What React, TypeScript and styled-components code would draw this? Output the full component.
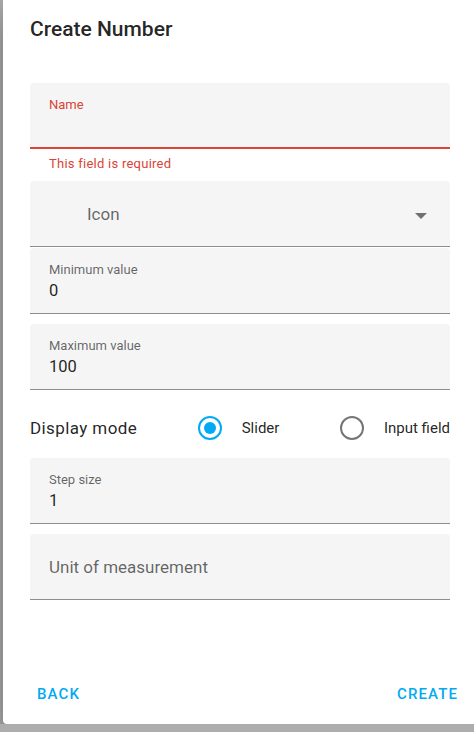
import styled, { createGlobalStyle } from 'styled-components'

const GlobalStyle = createGlobalStyle`
  html, body {
    margin: 0;
    padding: 0;
    background: #adadad;
    overflow: hidden;
    font-family: Roboto, "Noto Sans", "Liberation Sans", sans-serif;
  }
`

const Dialog = styled.div`
  margin-left: 3px;
  width: 474px;
  height: 724px;
  background: #ffffff;
  border-radius: 0 0 4px 4px;
  box-shadow: 0 11px 15px -7px rgba(0, 0, 0, 0.2),
    0 24px 38px 3px rgba(0, 0, 0, 0.14), 0 9px 46px 8px rgba(0, 0, 0, 0.12);
  display: flex;
  flex-direction: column;
  box-sizing: border-box;
`

const Title = styled.h2`
  margin: 0;
  padding: 15px 27px 0;
  font-size: 21px;
  line-height: 28px;
  font-weight: 500;
  color: rgba(0, 0, 0, 0.87);
`

const Content = styled.div`
  flex: 1;
  padding: 40px 27px 0;
  display: flex;
  flex-direction: column;
`

const Field = styled.div<{ $invalid?: boolean; $gap?: number }>`
  height: 66px;
  box-sizing: border-box;
  background: #f5f5f5;
  border-radius: 4px 4px 0 0;
  border-bottom: ${(p) =>
    p.$invalid ? '2px solid #db4437' : '1px solid rgba(0, 0, 0, 0.42)'};
  padding: 14px 19px 0;
  margin-top: ${(p) => p.$gap ?? 0}px;
  display: flex;
  flex-direction: column;
`

const Label = styled.span<{ $invalid?: boolean }>`
  font-size: 13px;
  line-height: 16px;
  color: ${(p) => (p.$invalid ? '#db4437' : 'rgba(0, 0, 0, 0.6)')};
`

const Value = styled.span`
  margin-top: 3px;
  font-size: 16.5px;
  line-height: 20px;
  color: rgba(0, 0, 0, 0.87);
`

const Helper = styled.div`
  padding: 7px 19px 0;
  height: 32px;
  box-sizing: border-box;
  font-size: 13px;
  line-height: 16px;
  letter-spacing: 0.25px;
  color: #db4437;
`

const PlaceholderField = styled(Field)`
  padding: 0 23px 0 19px;
  flex-direction: row;
  align-items: center;
`

const Placeholder = styled.span<{ $indent?: number }>`
  flex: 1;
  padding-left: ${(p) => p.$indent ?? 0}px;
  font-size: 17px;
  line-height: 20px;
  color: rgba(0, 0, 0, 0.6);
`

const Arrow = styled.span`
  width: 0;
  height: 0;
  margin-top: 5px;
  border-left: 6px solid transparent;
  border-right: 6px solid transparent;
  border-top: 6px solid rgba(0, 0, 0, 0.54);
`

const ModeRow = styled.div`
  height: 68px;
  padding-top: 8px;
  box-sizing: border-box;
  display: flex;
  align-items: center;
  justify-content: space-between;
`

const ModeTitle = styled.span`
  font-size: 17px;
  letter-spacing: 0.4px;
  color: rgba(0, 0, 0, 0.87);
`

const Option = styled.label`
  display: flex;
  align-items: center;
  gap: 8px;
  font-size: 15px;
  color: rgba(0, 0, 0, 0.87);
`

const RadioBox = styled.span`
  width: 48px;
  height: 48px;
  display: flex;
  align-items: center;
  justify-content: center;
`

const Radio = styled.span<{ $checked?: boolean }>`
  width: 24px;
  height: 24px;
  box-sizing: border-box;
  border-radius: 50%;
  border: 2.4px solid ${(p) => (p.$checked ? '#03a9f4' : 'rgba(0, 0, 0, 0.54)')};
  display: flex;
  align-items: center;
  justify-content: center;

  &::after {
    content: '';
    width: 12px;
    height: 12px;
    border-radius: 50%;
    background: #03a9f4;
    display: ${(p) => (p.$checked ? 'block' : 'none')};
  }
`

const Actions = styled.div`
  display: flex;
  justify-content: space-between;
  padding: 0 10px 9px 25px;
`

const Button = styled.button`
  height: 42px;
  padding: 0 9px;
  border: none;
  background: transparent;
  font-family: inherit;
  font-size: 15px;
  font-weight: 500;
  letter-spacing: 1.1px;
  text-transform: uppercase;
  color: #03a9f4;
  cursor: pointer;
`

export default function App() {
  return (
    <>
      <GlobalStyle />
      <Dialog>
        <Title>Create Number</Title>
        <Content>
          <Field $invalid>
            <Label $invalid>Name</Label>
          </Field>
          <Helper>This field is required</Helper>

          <PlaceholderField>
            <Placeholder $indent={38}>Icon</Placeholder>
            <Arrow />
          </PlaceholderField>

          <Field $gap={1}>
            <Label>Minimum value</Label>
            <Value>0</Value>
          </Field>

          <Field $gap={10}>
            <Label>Maximum value</Label>
            <Value>100</Value>
          </Field>

          <ModeRow>
            <ModeTitle>Display mode</ModeTitle>
            <Option>
              <RadioBox>
                <Radio $checked />
              </RadioBox>
              Slider
            </Option>
            <Option>
              <RadioBox>
                <Radio />
              </RadioBox>
              Input field
            </Option>
          </ModeRow>

          <Field>
            <Label>Step size</Label>
            <Value>1</Value>
          </Field>

          <PlaceholderField $gap={10}>
            <Placeholder>Unit of measurement</Placeholder>
          </PlaceholderField>
        </Content>
        <Actions>
          <Button>Back</Button>
          <Button>Create</Button>
        </Actions>
      </Dialog>
    </>
  )
}
